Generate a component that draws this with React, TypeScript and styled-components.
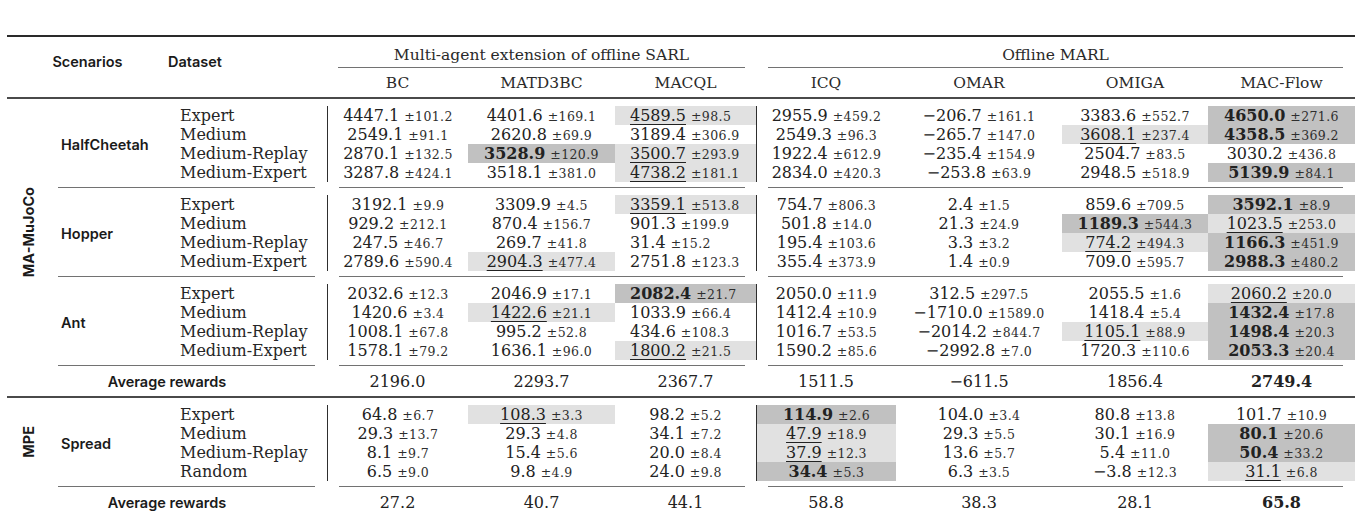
import React from 'react';
import styled, { createGlobalStyle } from 'styled-components';

type Tone = 'best' | 'second' | undefined;
type Val = [string, string?, Tone?];
type Row = { d: string; v: Val[] };
type Group = { name: string; rows: Row[] };
type Domain = { label: string; groups: Group[]; avg: Val[]; pads: (number | undefined)[] };

const B: Tone = 'best';
const S: Tone = 'second';

const FULL_COLS = '43px 118px 159px 141px 147px 141px 140px 166px 146px 147px';
const INNER_COLS = '118px 159px 141px 147px 141px 140px 166px 146px 147px';

const methods = ['BC', 'MATD3BC', 'MACQL', 'ICQ', 'OMAR', 'OMIGA', 'MAC-Flow'];

const domains: Domain[] = [
  {
    label: 'MA-MuJoCo',
    pads: [undefined, undefined, 15, undefined, undefined, undefined, undefined],
    groups: [
      {
        name: 'HalfCheetah',
        rows: [
          { d: 'Expert', v: [['4447.1', '101.2'], ['4401.6', '169.1'], ['4589.5', '98.5', S], ['2955.9', '459.2'], ['−206.7', '161.1'], ['3383.6', '552.7'], ['4650.0', '271.6', B]] },
          { d: 'Medium', v: [['2549.1', '91.1'], ['2620.8', '69.9'], ['3189.4', '306.9'], ['2549.3', '96.3'], ['−265.7', '147.0'], ['3608.1', '237.4', S], ['4358.5', '369.2', B]] },
          { d: 'Medium-Replay', v: [['2870.1', '132.5'], ['3528.9', '120.9', B], ['3500.7', '293.9', S], ['1922.4', '612.9'], ['−235.4', '154.9'], ['2504.7', '83.5'], ['3030.2', '436.8']] },
          { d: 'Medium-Expert', v: [['3287.8', '424.1'], ['3518.1', '381.0'], ['4738.2', '181.1', S], ['2834.0', '420.3'], ['−253.8', '63.9'], ['2948.5', '518.9'], ['5139.9', '84.1', B]] },
        ],
      },
      {
        name: 'Hopper',
        rows: [
          { d: 'Expert', v: [['3192.1', '9.9'], ['3309.9', '4.5'], ['3359.1', '513.8', S], ['754.7', '806.3'], ['2.4', '1.5'], ['859.6', '709.5'], ['3592.1', '8.9', B]] },
          { d: 'Medium', v: [['929.2', '212.1'], ['870.4', '156.7'], ['901.3', '199.9'], ['501.8', '14.0'], ['21.3', '24.9'], ['1189.3', '544.3', B], ['1023.5', '253.0', S]] },
          { d: 'Medium-Replay', v: [['247.5', '46.7'], ['269.7', '41.8'], ['31.4', '15.2'], ['195.4', '103.6'], ['3.3', '3.2'], ['774.2', '494.3', S], ['1166.3', '451.9', B]] },
          { d: 'Medium-Expert', v: [['2789.6', '590.4'], ['2904.3', '477.4', S], ['2751.8', '123.3'], ['355.4', '373.9'], ['1.4', '0.9'], ['709.0', '595.7'], ['2988.3', '480.2', B]] },
        ],
      },
      {
        name: 'Ant',
        rows: [
          { d: 'Expert', v: [['2032.6', '12.3'], ['2046.9', '17.1'], ['2082.4', '21.7', B], ['2050.0', '11.9'], ['312.5', '297.5'], ['2055.5', '1.6'], ['2060.2', '20.0', S]] },
          { d: 'Medium', v: [['1420.6', '3.4'], ['1422.6', '21.1', S], ['1033.9', '66.4'], ['1412.4', '10.9'], ['−1710.0', '1589.0'], ['1418.4', '5.4'], ['1432.4', '17.8', B]] },
          { d: 'Medium-Replay', v: [['1008.1', '67.8'], ['995.2', '52.8'], ['434.6', '108.3'], ['1016.7', '53.5'], ['−2014.2', '844.7'], ['1105.1', '88.9', S], ['1498.4', '20.3', B]] },
          { d: 'Medium-Expert', v: [['1578.1', '79.2'], ['1636.1', '96.0'], ['1800.2', '21.5', S], ['1590.2', '85.6'], ['−2992.8', '7.0'], ['1720.3', '110.6'], ['2053.3', '20.4', B]] },
        ],
      },
    ],
    avg: [['2196.0'], ['2293.7'], ['2367.7'], ['1511.5'], ['−611.5'], ['1856.4'], ['2749.4', undefined, B]],
  },
  {
    label: 'MPE',
    pads: [undefined, undefined, undefined, undefined, undefined, undefined, undefined],
    groups: [
      {
        name: 'Spread',
        rows: [
          { d: 'Expert', v: [['64.8', '6.7'], ['108.3', '3.3', S], ['98.2', '5.2'], ['114.9', '2.6', B], ['104.0', '3.4'], ['80.8', '13.8'], ['101.7', '10.9']] },
          { d: 'Medium', v: [['29.3', '13.7'], ['29.3', '4.8'], ['34.1', '7.2'], ['47.9', '18.9', S], ['29.3', '5.5'], ['30.1', '16.9'], ['80.1', '20.6', B]] },
          { d: 'Medium-Replay', v: [['8.1', '9.7'], ['15.4', '5.6'], ['20.0', '8.4'], ['37.9', '12.3', S], ['13.6', '5.7'], ['5.4', '11.0'], ['50.4', '33.2', B]] },
          { d: 'Random', v: [['6.5', '9.0'], ['9.8', '4.9'], ['24.0', '9.8'], ['34.4', '5.3', B], ['6.3', '3.5'], ['−3.8', '12.3'], ['31.1', '6.8', S]] },
        ],
      },
    ],
    avg: [['27.2'], ['40.7'], ['44.1'], ['58.8'], ['38.3'], ['28.1'], ['65.8', undefined, B]],
  },
];

const GlobalStyle = createGlobalStyle`
  html, body {
    margin: 0;
    padding: 0;
    background: #ffffff;
  }
  body {
    width: 1358px;
    height: 513px;
    overflow: hidden;
  }
`;

const Page = styled.div`
  padding: 35px 3px 0 7px;
  color: #222;
  font-family: 'DejaVu Serif', serif;
`;

const Table = styled.div`
  width: 1348px;
  display: flex;
  flex-direction: column;
`;

const HRule = styled.div<{ $thick?: boolean }>`
  height: 2px;
  background: ${(p) => (p.$thick ? '#2a2a2a' : '#4a4a4a')};
`;

const Header = styled.div`
  display: grid;
  grid-template-columns: ${FULL_COLS};
  grid-template-rows: 30px 1px 29px;
`;

const SansHead = styled.div<{ $col: string; $align?: 'left' | 'center' }>`
  grid-column: ${(p) => p.$col};
  grid-row: 1 / 4;
  align-self: center;
  padding-bottom: 11px;
  text-align: ${(p) => p.$align ?? 'center'};
  font-family: 'Inter', 'Liberation Sans', sans-serif;
  font-weight: 600;
  font-size: 14.5px;
  color: #1a1a1a;
`;

const GroupTitle = styled.div<{ $col: string }>`
  grid-column: ${(p) => p.$col};
  grid-row: 1;
  align-self: end;
  padding-bottom: 3px;
  text-align: center;
  font-size: 15.5px;
  line-height: 18px;
  color: #2a2a2a;
`;

const Seg = styled.div<{ $col: string; $l: number; $r: number; $row?: number }>`
  grid-column: ${(p) => p.$col};
  grid-row: ${(p) => p.$row ?? 'auto'};
  margin: 0 ${(p) => p.$r}px 0 ${(p) => p.$l}px;
  height: 1px;
  background: #727272;
`;

const MethodName = styled.div`
  grid-row: 3;
  align-self: center;
  text-align: center;
  font-size: 15.5px;
  line-height: 18px;
  color: #2a2a2a;
`;

const SegRow = styled.div<{ $cols: string }>`
  display: grid;
  grid-template-columns: ${(p) => p.$cols};
  height: 1px;
`;

const DomainBlock = styled.div`
  display: grid;
  grid-template-columns: 43px 1fr;
`;

const DomainLabel = styled.div`
  display: flex;
  align-items: center;
  justify-content: center;
`;

const Rotated = styled.span`
  writing-mode: vertical-rl;
  transform: rotate(180deg);
  font-family: 'Inter', 'Liberation Sans', sans-serif;
  font-weight: 700;
  font-size: 14.5px;
  color: #1a1a1a;
`;

const Groups = styled.div`
  display: flex;
  flex-direction: column;
`;

const GroupGrid = styled.div`
  display: grid;
  grid-template-columns: ${INNER_COLS};
  grid-auto-rows: 19px;
  padding: 7px 0 5px;
`;

const ScenarioName = styled.div`
  grid-row: 1 / span 4;
  align-self: center;
  padding-left: 11px;
  font-family: 'Inter', 'Liberation Sans', sans-serif;
  font-weight: 600;
  font-size: 14.5px;
  color: #1a1a1a;
`;

const DatasetName = styled.div`
  padding-left: 12px;
  font-size: 16px;
  line-height: 19px;
  color: #262626;
  white-space: nowrap;
`;

const Cell = styled.div<{ $tone?: Tone; $divider?: boolean; $pad?: number }>`
  display: flex;
  align-items: baseline;
  justify-content: ${(p) => (p.$pad !== undefined ? 'flex-start' : 'center')};
  padding-left: ${(p) => p.$pad ?? 0}px;
  gap: 5px;
  height: 19px;
  line-height: 19px;
  font-size: 16px;
  white-space: nowrap;
  box-sizing: border-box;
  border-left: ${(p) => (p.$divider ? '1px solid #2e2e2e' : '0')};
  background: ${(p) =>
    p.$tone === 'best' ? '#c1c1c1' : p.$tone === 'second' ? '#e1e1e1' : 'transparent'};
`;

const Mean = styled.span<{ $bold?: boolean; $under?: boolean }>`
  font-weight: ${(p) => (p.$bold ? 700 : 400)};
  text-decoration: ${(p) => (p.$under ? 'underline' : 'none')};
  text-decoration-thickness: 1px;
  text-underline-offset: 3px;
  color: #222;
`;

const Std = styled.span`
  font-size: 12.5px;
  letter-spacing: 0.4px;
  color: #2e2e2e;
`;

const AvgRow = styled.div`
  display: grid;
  grid-template-columns: ${FULL_COLS};
  height: 30px;
  align-items: center;
`;

const AvgLabel = styled.div`
  grid-column: 1 / 4;
  text-align: center;
  font-family: 'Inter', 'Liberation Sans', sans-serif;
  font-weight: 600;
  font-size: 14.5px;
  color: #1a1a1a;
`;

const AvgValue = styled.div<{ $bold?: boolean }>`
  text-align: center;
  font-size: 16px;
  font-weight: ${(p) => (p.$bold ? 700 : 400)};
  color: #222;
`;

function ValueCell({ val, divider, pad }: { val: Val; divider?: boolean; pad?: number }) {
  const [mean, std, tone] = val;
  return (
    <Cell $tone={tone} $divider={divider} $pad={pad}>
      <Mean $bold={tone === 'best'} $under={tone === 'second'}>
        {mean}
      </Mean>
      {std && <Std>±{std}</Std>}
    </Cell>
  );
}

function GroupRows({ group, pads }: { group: Group; pads: (number | undefined)[] }) {
  return (
    <GroupGrid>
      <ScenarioName>{group.name}</ScenarioName>
      {group.rows.map((row) => (
        <React.Fragment key={row.d}>
          <DatasetName>{row.d}</DatasetName>
          {row.v.map((v, i) => (
            <ValueCell key={i} val={v} divider={i === 0 || i === 3} pad={pads[i]} />
          ))}
        </React.Fragment>
      ))}
    </GroupGrid>
  );
}

function InnerSeparator() {
  return (
    <SegRow $cols={INNER_COLS}>
      <Seg $col="1 / 3" $l={8} $r={12} />
      <Seg $col="3 / 6" $l={12} $r={11} />
      <Seg $col="6 / 10" $l={12} $r={12} />
    </SegRow>
  );
}

function OuterSeparator() {
  return (
    <SegRow $cols={FULL_COLS}>
      <Seg $col="2 / 4" $l={8} $r={12} />
      <Seg $col="4 / 7" $l={12} $r={11} />
      <Seg $col="7 / 11" $l={12} $r={12} />
    </SegRow>
  );
}

function DomainSection({ domain }: { domain: Domain }) {
  return (
    <>
      <DomainBlock>
        <DomainLabel>
          <Rotated>{domain.label}</Rotated>
        </DomainLabel>
        <Groups>
          {domain.groups.map((g, i) => (
            <React.Fragment key={g.name}>
              {i > 0 && <InnerSeparator />}
              <GroupRows group={g} pads={domain.pads} />
            </React.Fragment>
          ))}
        </Groups>
      </DomainBlock>
      <OuterSeparator />
      <AvgRow>
        <AvgLabel>Average rewards</AvgLabel>
        {domain.avg.map((v, i) => (
          <AvgValue key={i} $bold={v[2] === 'best'}>
            {v[0]}
          </AvgValue>
        ))}
      </AvgRow>
    </>
  );
}

export default function App() {
  return (
    <>
      <GlobalStyle />
      <Page>
        <Table>
          <HRule $thick />
          <Header>
            <SansHead $col="1 / 3">Scenarios</SansHead>
            <SansHead $col="3" $align="left">Dataset</SansHead>
            <GroupTitle $col="4 / 7">Multi-agent extension of offline SARL</GroupTitle>
            <GroupTitle $col="7 / 11">Offline MARL</GroupTitle>
            <Seg $col="4 / 7" $row={2} $l={11} $r={11} />
            <Seg $col="7 / 11" $row={2} $l={12} $r={12} />
            {methods.map((m) => (
              <MethodName key={m}>{m}</MethodName>
            ))}
          </Header>
          <HRule />
          {domains.map((d, i) => (
            <React.Fragment key={d.label}>
              {i > 0 && <HRule />}
              <DomainSection domain={d} />
            </React.Fragment>
          ))}
        </Table>
      </Page>
    </>
  );
}
